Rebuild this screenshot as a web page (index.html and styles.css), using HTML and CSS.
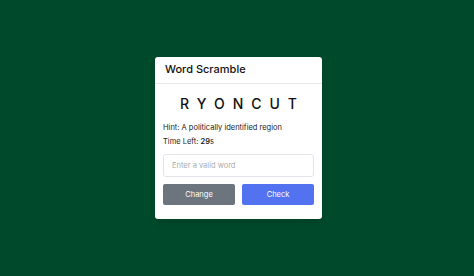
FILE: index.html
```html
<!DOCTYPE html>
<html lang="en">
<head>
    <meta charset="UTF-8">
    <title>Word Scramble</title>
    <link rel="stylesheet" href="styles.css">
</head>
<body>
    <div class="container">
        <h2>Word Scramble</h2>
        <div class="content">
            <p class="word">RYONCUT</p>
            <div class="details">
                <p class="hint">Hint: <span>A politically identified region</span></p>
                <p class="time">Time Left: <span><b>29</b>s</span></p>
            </div>
            <input type="text" spellcheck="false" placeholder="Enter a valid word">
            <div class="buttons">
                <button class="refresh-word">Change</button>
                <button class="check-word">Check</button>
            </div>
        </div>
    </div>
</body>
</html>
```

FILE: styles.css
```css
* {
    margin: 0;
    padding: 0;
    box-sizing: border-box;
    font-family: "Inter", "Open Sans", sans-serif;
}
body {
    display: flex;
    align-items: center;
    justify-content: center;
    min-height: 100vh;
    background: #004a2b;
}
.container {
    width: 167px;
    margin-left: 3px;
    border-radius: 3px;
    background: #ffffff;
    box-shadow: 0 4px 8px rgba(0,0,0,0.15);
}
.container h2 {
    font-size: 11px;
    font-weight: 500;
    color: #111111;
    padding: 6px 10px 7px;
    border-bottom: 1px solid #e8e8e8;
    line-height: 13px;
}
.container .content {
    padding: 10px 8px 14px;
}
.content .word {
    font-size: 14px;
    font-weight: 500;
    text-align: center;
    letter-spacing: 8px;
    margin-right: -8px;
    text-transform: uppercase;
    color: #111111;
    line-height: 20px;
}
.content .details {
    margin: 9px 0 5px;
}
.details p {
    font-size: 7.5px;
    color: #222222;
    line-height: 10px;
    margin-bottom: 4px;
}
.details p b {
    font-weight: 600;
}
.content input {
    width: 100%;
    height: 23px;
    outline: none;
    font-size: 7.5px;
    padding: 0 8px;
    border-radius: 3px;
    border: 1px solid #e4e4ee;
    color: #333333;
}
.content input::placeholder {
    color: #aaaaaa;
}
.content .buttons {
    display: flex;
    margin-top: 7px;
    justify-content: space-between;
}
.buttons button {
    border: none;
    outline: none;
    color: #ffffff;
    cursor: pointer;
    padding: 0;
    height: 21px;
    font-size: 7.5px;
    border-radius: 2px;
    width: calc(50% - 3.5px);
}
.buttons .refresh-word {
    background: #6c757d;
}
.buttons .check-word {
    background: #5372f0;
}
```
